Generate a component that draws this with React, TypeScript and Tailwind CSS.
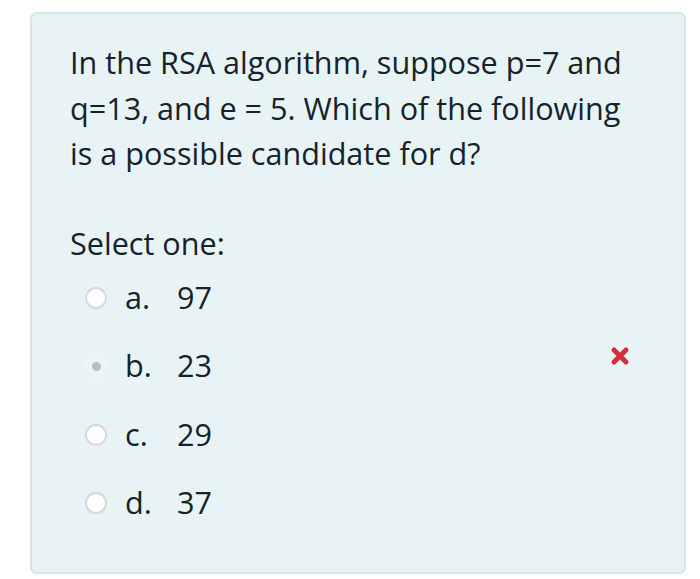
const options = [
  { letter: 'a.', value: '97', state: 'empty' },
  { letter: 'b.', value: '23', state: 'chosen', wrong: true },
  { letter: 'c.', value: '29', state: 'empty' },
  { letter: 'd.', value: '37', state: 'empty' },
]

function Radio({ chosen }: { chosen: boolean }) {
  if (chosen) {
    return (
      <span className="flex h-[22px] w-[22px] items-center justify-center rounded-full bg-[#eef4f6]">
        <span className="h-[9px] w-[9px] rounded-full bg-[#b9bcc0]" />
      </span>
    )
  }
  return <span className="h-[22px] w-[22px] rounded-full border-2 border-[#d6d8da] bg-white" />
}

function WrongMark() {
  return (
    <svg width="20" height="20" viewBox="0 0 20 20" className="text-[#d3303f]">
      <path d="M4 4 L16 16 M16 4 L4 16" stroke="currentColor" strokeWidth="5" strokeLinecap="round" />
    </svg>
  )
}

export default function App() {
  return (
    <div className="min-h-[579px] bg-white pt-[12px] pl-[30px] pr-[14px] font-['Open_Sans',sans-serif] text-[#16232a]">
      <div className="h-[562px] rounded-[7px] border-2 border-[#d3e6ec] bg-[#e7f3f5] pl-[38px] pr-[44px] pt-[26px]">
        <p className="text-[30.6px] leading-[45.5px]">
          In the RSA algorithm, suppose p=7 and q=13, and e = 5. Which of the following is a possible candidate for d?
        </p>
        <p className="mt-[44px] text-[30.6px] leading-[45px]">Select one:</p>
        <div className="-mt-[2px] flex flex-col">
          {options.map((o) => (
            <div key={o.letter} className="flex h-[68.5px] items-center pl-[15px] text-[30.6px]">
              <Radio chosen={o.state === 'chosen'} />
              <span className="ml-[18px] w-[52px]">{o.letter}</span>
              <span>{o.value}</span>
              {o.wrong ? (
                <span className="mb-[20px] ml-auto mr-[10px]">
                  <WrongMark />
                </span>
              ) : null}
            </div>
          ))}
        </div>
      </div>
    </div>
  )
}
